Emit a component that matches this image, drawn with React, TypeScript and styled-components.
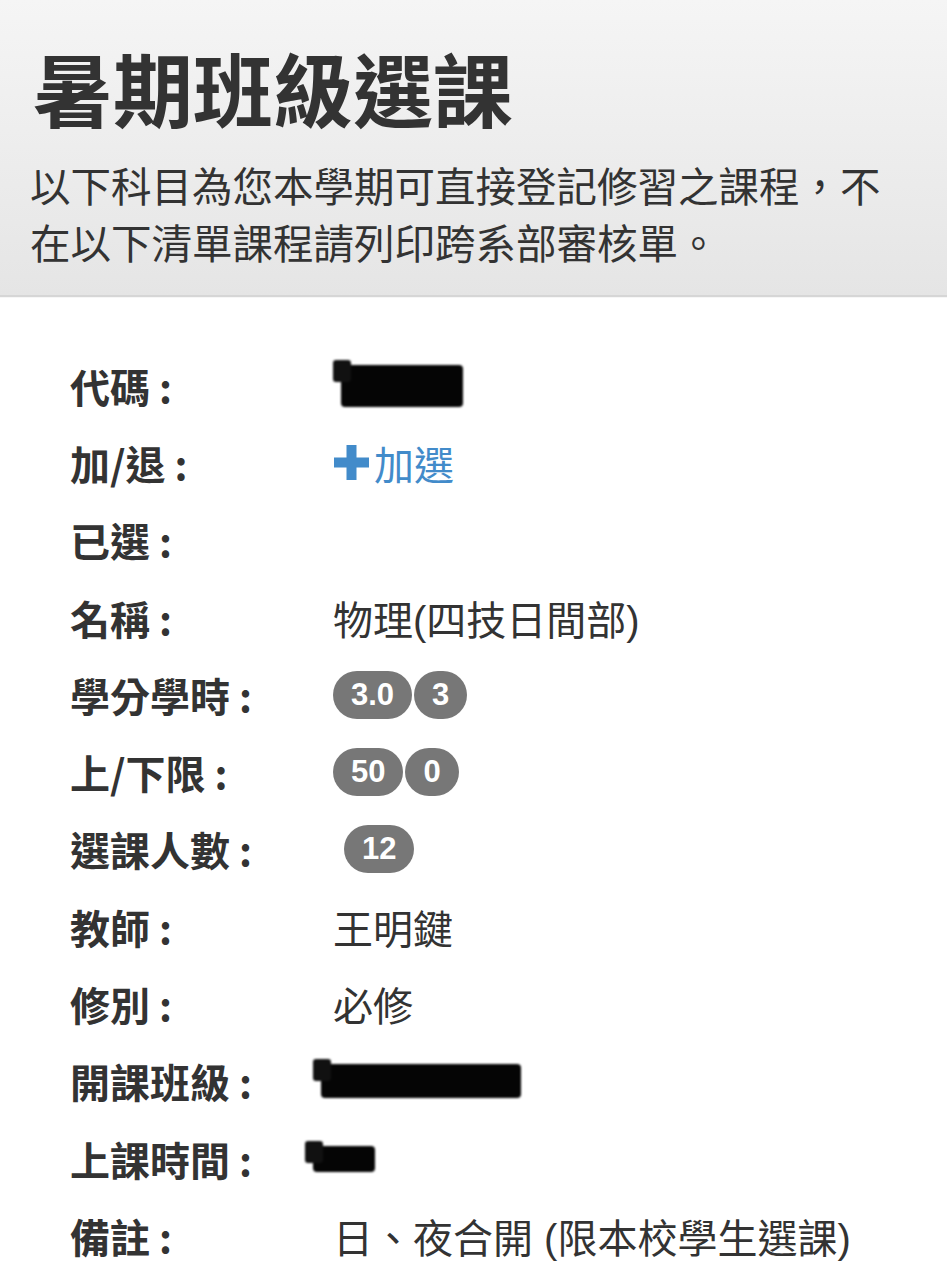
import React from 'react';
import styled, { createGlobalStyle } from 'styled-components';

const GlobalStyle = createGlobalStyle`
  body {
    margin: 0;
    background: #fff;
    font-family: 'Liberation Sans', 'Noto Sans CJK TC', sans-serif;
    color: #333;
  }
`;

const Header = styled.header`
  height: 297px;
  box-sizing: border-box;
  padding: 36px 0 0 33px;
  background: linear-gradient(#f5f5f5, #e5e5e5);
  border-bottom: 2px solid #d6d6d6;
  box-shadow: 0 1px 0 #f6f6f6;
  .title {
    margin: 0;
    font-size: 80px;
    line-height: 100px;
    font-weight: bold;
    color: #333;
    font-family: 'Noto Sans CJK TC', sans-serif;
  }
  .lead {
    margin: 20px 0 0 -3px;
    max-width: 870px;
    font-size: 40.5px;
    line-height: 57px;
    color: #333;
    font-family: 'Noto Sans CJK TC', sans-serif;
  }
`;

const Details = styled.div`
  margin-top: 50px;
  padding-left: 70px;
`;

const Row = styled.div`
  display: flex;
  align-items: center;
  height: 77.3px;
  font-size: 40px;
  .label {
    width: 263px;
    flex-shrink: 0;
    font-weight: bold;
    font-family: 'Noto Sans CJK TC', sans-serif;
  }
  .value {
    display: flex;
    align-items: center;
  }
`;

const Badge = styled.span<{ $offset?: number }>`
  display: inline-block;
  height: 48px;
  line-height: 48px;
  padding: 0 18px;
  margin-right: 2px;
  margin-left: ${(p) => p.$offset || 0}px;
  border-radius: 24px;
  background: #777;
  color: #fff;
  font-size: 31px;
  font-weight: bold;
  font-family: 'Liberation Sans', sans-serif;
`;

const Redacted = styled.span<{ $w: number; $h: number; $shift?: number }>`
  position: relative;
  display: inline-block;
  width: ${(p) => p.$w}px;
  height: ${(p) => p.$h}px;
  margin-left: ${(p) => p.$shift || 0}px;
  background: #050505;
  border-radius: 4px;
  filter: blur(1.2px);
  &::before {
    content: '';
    position: absolute;
    left: -8px;
    top: -5px;
    width: 18px;
    height: 22px;
    background: #111;
    border-radius: 3px;
  }
`;

const AddLink = styled.a`
  display: inline-flex;
  align-items: center;
  color: #428bca;
  text-decoration: none;
  font-family: 'Noto Sans CJK TC', sans-serif;
  svg {
    margin-right: 4px;
  }
`;

const PlusIcon = () => (
  <svg width="37" height="37" viewBox="0 0 37 37">
    <path d="M13.5 1h10v12.5H36v10H23.5V36h-10V23.5H1v-10h12.5z" fill="#428bca" />
  </svg>
);

const App = () => {
  return (
    <>
      <GlobalStyle />
      <Header>
        <h1 className='title'>暑期班級選課</h1>
        <p className='lead'>以下科目為您本學期可直接登記修習之課程，不在以下清單課程請列印跨系部審核單。</p>
      </Header>
      <Details>
        <Row>
          <div className='label'>代碼 :</div>
          <div className='value'>
            <Redacted $w={122} $h={42} $shift={8} />
          </div>
        </Row>
        <Row>
          <div className='label'>加/退 :</div>
          <div className='value'>
            <AddLink href='#'>
              <PlusIcon />
              加選
            </AddLink>
          </div>
        </Row>
        <Row>
          <div className='label'>已選 :</div>
          <div className='value'></div>
        </Row>
        <Row>
          <div className='label'>名稱 :</div>
          <div className='value'>物理(四技日間部)</div>
        </Row>
        <Row>
          <div className='label'>學分學時 :</div>
          <div className='value'>
            <Badge>3.0</Badge>
            <Badge>3</Badge>
          </div>
        </Row>
        <Row>
          <div className='label'>上/下限 :</div>
          <div className='value'>
            <Badge>50</Badge>
            <Badge>0</Badge>
          </div>
        </Row>
        <Row>
          <div className='label'>選課人數 :</div>
          <div className='value'>
            <Badge $offset={11}>12</Badge>
          </div>
        </Row>
        <Row>
          <div className='label'>教師 :</div>
          <div className='value'>王明鍵</div>
        </Row>
        <Row>
          <div className='label'>修別 :</div>
          <div className='value'>必修</div>
        </Row>
        <Row>
          <div className='label'>開課班級 :</div>
          <div className='value'>
            <Redacted $w={200} $h={34} $shift={-12} />
          </div>
        </Row>
        <Row>
          <div className='label'>上課時間 :</div>
          <div className='value'>
            <Redacted $w={62} $h={26} $shift={-20} />
          </div>
        </Row>
        <Row>
          <div className='label'>備註 :</div>
          <div className='value'>日、夜合開 (限本校學生選課)</div>
        </Row>
      </Details>
    </>
  );
};

export default App;
